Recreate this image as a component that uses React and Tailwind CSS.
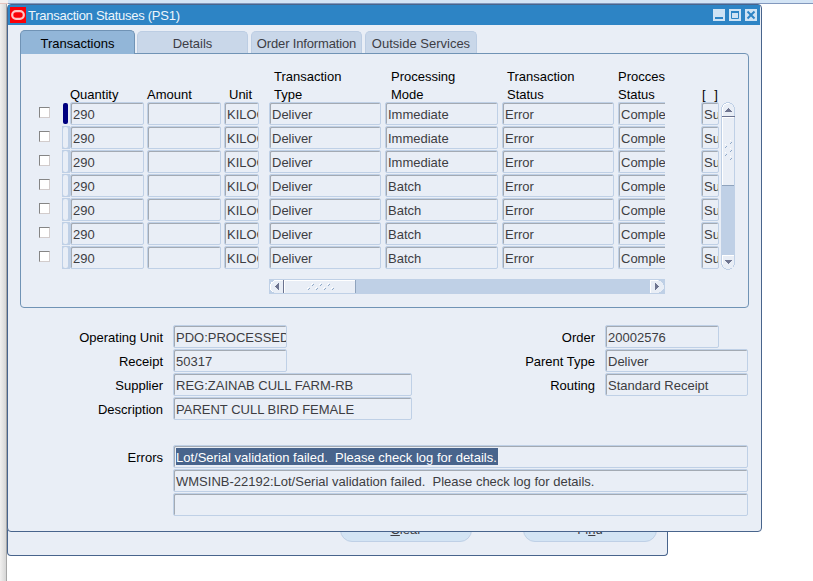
import React from 'react';
import clsx from 'clsx';

const rows = [
    { mode: 'Immediate', current: true },
    { mode: 'Immediate' },
    { mode: 'Immediate' },
    { mode: 'Batch' },
    { mode: 'Batch' },
    { mode: 'Batch' },
    { mode: 'Batch' }
];

const columns = [
    { head: ['Quantity'], value: () => '290', className: 'w-[74px]' },
    { head: ['Amount'], value: () => '', className: 'ml-[3px] w-[74px]' },
    { head: ['Unit'], value: () => 'KILOG', className: 'ml-[3px] w-[35px]', headClass: 'pl-[5px]' },
    { head: ['Transaction', 'Type'], value: () => 'Deliver', className: 'ml-[10px] w-[112px]', headClass: 'pl-[5px]' },
    { head: ['Processing', 'Mode'], value: (row) => row.mode, className: 'ml-1 w-[113px]', headClass: 'pl-1.5' },
    { head: ['Transaction', 'Status'], value: () => 'Error', className: 'ml-1 w-[112px]', headClass: 'pl-[5px]' },
    { head: ['Procces', 'Status'], value: () => 'Comple', className: 'ml-1 w-[47px]', cut: true },
    { head: ['[  ]'], value: () => 'Su', className: 'ml-9 w-[18px]', headClass: 'pl-px tracking-[0.5px]' }
];

const Field = ({ children, className, cut, selected }) => (
    <div
        className={clsx(
            'h-[23px] shrink-0 overflow-hidden whitespace-pre border border-[#bfd0e6] pl-px text-[#3d3d42] shadow-[inset_1px_1px_0_#a3aab3]',
            cut ? 'rounded-l-[2px] border-r-0' : 'rounded-[2px]',
            className
        )}
    >
        {selected ? (
            <span className="mt-[2px] ml-px block h-[17px] w-[322px] bg-[#48648c] leading-[19px] text-white">{children}</span>
        ) : (
            <span className="block pl-px leading-[23px]">{children}</span>
        )}
    </div>
);

const Column = ({ head, value, className, headClass, cut }) => (
    <div className={clsx('shrink-0', className)}>
        <div className={clsx('h-[34px] whitespace-pre leading-[18px] text-black', headClass, head.length === 1 && 'pt-[18px]')}>
            {head.map((line) => (
                <div key={line}>{line}</div>
            ))}
        </div>
        <div className="flex flex-col gap-px">
            {rows.map((row, i) => (
                <Field key={i} cut={cut}>{value(row)}</Field>
            ))}
        </div>
    </div>
);

const VerticalScroll = () => (
    <svg className="mt-[34px] ml-[2px] h-[168px] w-[14px] shrink-0" viewBox="0 0 14 168" shapeRendering="crispEdges">
        <rect y="14" width="14" height="140" fill="#bfd0e6" />
        <path d="M.5 15V5.5L2.500 2.500L5.500.5H8.500L11.500 2.500L13.500 5.500V15" fill="#e9eef6" stroke="#bfd0e6" />
        <path d="M1.500 14V6L3 3L6 1.500H8" fill="none" stroke="#fff" />
        <path d="M3 10h8L7 6z" fill="#6f7590" />
        <rect x="1" y="14" width="13" height="1" fill="#6b7390" />
        <rect x="1" y="15" width="12" height="68" fill="#e9eef6" />
        <path d="M1.500 83V15.500H13" fill="none" stroke="#fff" />
        <rect x="1" y="83" width="12" height="1" fill="#8fa3bd" />
        <g shapeRendering="auto" stroke="#8fa9c8">
            <path d="M9 42l2-2M4 46l2-2M9 50l2-2M4 54l2-2M9 58l2-2" />
            <path d="M9 39l1-1M4 43l1-1M9 47l1-1M4 51l1-1M9 55l1-1" stroke="#fff" />
        </g>
        <path d="M.5 153V162.500L2.500 165.500L5.500 167.500H8.500L11.500 165.500L13.500 162.500V153z" fill="#e9eef6" stroke="#bfd0e6" />
        <path d="M1.500 162V153.500H13" fill="none" stroke="#fff" />
        <path d="M3 158h8l-4 4z" fill="#6f7590" />
    </svg>
);

const HorizontalScroll = () => (
    <svg className="h-[15px] w-[396px]" viewBox="0 0 396 15" shapeRendering="crispEdges">
        <rect width="396" height="15" fill="#bfd0e6" />
        <path d="M14 1H6L3 3L1 6v3l2 3l3 2h8z" fill="#e9eef6" />
        <path d="M14 1.500H6L3 3.500L1.500 6v4l2 3" fill="none" stroke="#fff" />
        <path d="M10 4v7L6 7.500z" fill="#6f7590" />
        <rect x="14" y="1" width="1" height="13" fill="#6b7390" />
        <rect x="15" y="1" width="71" height="13" fill="#e9eef6" />
        <path d="M15.500 14V1.500H86" fill="none" stroke="#fff" />
        <rect x="86" y="1" width="1" height="13" fill="#8fa3bd" />
        <g shapeRendering="auto" stroke="#8fa9c8">
            <path d="M43 7l2-2M51 7l2-2M59 7l2-2M39 11l2-2M47 11l2-2M55 11l2-2M63 11l2-2" />
            <path d="M42 6l2-2M50 6l2-2M58 6l2-2M38 10l2-2M46 10l2-2M54 10l2-2M62 10l2-2" stroke="#fff" />
        </g>
        <path d="M381 1h8l4 2l2 4v2l-2 3l-4 2h-8z" fill="#e9eef6" />
        <path d="M381.500 14V1.500H389" fill="none" stroke="#fff" />
        <path d="M386 4v7l4-3.500z" fill="#6f7590" />
    </svg>
);

const TitleButton = ({ children }) => (
    <svg className="size-3" viewBox="0 0 12 12">
        <rect width="12" height="12" fill="#cfe3f4" />
        {children}
    </svg>
);

const TitleBar = () => (
    <div className="mr-px flex h-5 items-center bg-[#2d84c5] pr-[3px] pl-[2px]">
        <svg className="h-4 w-4" viewBox="0 0 16 16">
            <rect width="16" height="16" fill="#fb0007" />
            <rect x="2.200" y="4.200" width="11.600" height="7.600" rx="3.800" fill="none" stroke="#ffc4c4" strokeWidth="2.200" />
        </svg>
        <span className="ml-[2px] whitespace-pre pt-px leading-5 tracking-[-0.26px] text-[#eef6fc]">Transaction Statuses (PS1)</span>
        <div className="ml-auto flex gap-1">
            <TitleButton>
                <rect x="2" y="8" width="8" height="2" fill="#2d84c5" />
            </TitleButton>
            <TitleButton>
                <path d="M2.500 3h7v6.500h-7z" fill="none" stroke="#2d84c5" />
                <rect x="2" y="2" width="8" height="2" fill="#2d84c5" />
            </TitleButton>
            <TitleButton>
                <path d="M2.500 2.500l7 7M9.500 2.500l-7 7" stroke="#2d84c5" strokeWidth="2" />
            </TitleButton>
        </div>
    </div>
);

const Tab = ({ children, className }) => (
    <div className={clsx('mt-px h-[22px] rounded-t-[5px] border border-b-0 border-[#bccde3] bg-[#c9d7e9] text-center leading-[24px] whitespace-nowrap text-[#3d3d45]', className)}>
        {children}
    </div>
);

const LabelledField = ({ label, labelClass, fieldClass, children, selected }) => (
    <div className="flex h-[23px]">
        <div className={clsx('shrink-0 text-right leading-[26px] whitespace-nowrap text-black', labelClass)}>{label}</div>
        <Field className={clsx('ml-[10px]', fieldClass)} selected={selected}>{children}</Field>
    </div>
);

const BackWindow = () => (
    <div className="absolute top-[500px] left-[7px] flex h-[56px] w-[661px] rounded-b-[4px] border border-t-0 border-[#48648c] bg-[#e9eef6] pl-[332px]">
        <div className="h-[42px] w-[132px] rounded-b-[12px] border border-[#bfd0e6] bg-[#d3e4f4] pt-[19px] text-center leading-5 text-[#3d3d42]">
            <span className="underline underline-offset-1">C</span>lear
        </div>
        <div className="ml-[51px] h-[42px] w-[134px] rounded-b-[12px] border border-[#bfd0e6] bg-[#d3e4f4] pt-[19px] text-center leading-5 text-[#3d3d42]">
            Fi<span className="underline underline-offset-1">n</span>d
        </div>
    </div>
);

const TransactionsPanel = () => (
    <div className="h-[255px] w-[729px] rounded-[4px] rounded-tl-none border border-[#7093b5] pt-[14px]">
        <div className="flex h-[202px]">
            <div className="ml-[18px] w-[11px] pt-[39px]">
                {rows.map((row, i) => (
                    <div key={i} className="mb-[13px] size-[11px] border border-t-[#858585] border-r-[#d2cccc] border-b-[#d2cccc] border-l-[#858585] bg-white" />
                ))}
            </div>
            <div className="ml-3 w-2 pt-[34px]">
                {rows.map((row, i) => (
                    <div key={i} className={clsx('mb-px h-[23px]', row.current ? 'py-px pl-px' : 'bg-[#bfd0e6] p-px')}>
                        <div className={clsx('h-[21px] w-[5px] rounded-[2px]', row.current ? 'bg-[#00007f]' : 'bg-[#e9eef6]')} />
                    </div>
                ))}
            </div>
            {columns.map((column, i) => (
                <Column key={i} {...column} />
            ))}
            <VerticalScroll />
        </div>
        <div className="mt-[9px] pl-[248px]">
            <HorizontalScroll />
        </div>
    </div>
);

const App = () => {
    return (
        <div className="relative h-[581px] w-[813px] overflow-hidden bg-white font-['Liberation_Sans',Arial,sans-serif] text-[13px]">
            <div className="h-1 border-b border-[#8298bd] bg-[#d3e4f5]" />
            <div className="absolute top-0 left-0 h-[581px] w-[7px] border-r border-[#a6a6a6] bg-linear-to-r from-[#f1f0ef] to-[#d6d6d6]" />
            <div className="absolute top-0 left-0 h-1 w-2 border-b border-[#e5c5bf] bg-[#f4f0ef]" />
            <BackWindow />
            <div className="absolute top-1 left-[7px] h-[528px] w-[755px] rounded-[4px] border border-[#48648c] bg-[#e9eef6]">
                <TitleBar />
                <div className="mt-[5px] ml-3 flex h-[23px]">
                    <div className="z-10 h-6 w-[115px] rounded-t-[5px] border border-b-0 border-[#7093b5] bg-[#92b6d8] text-center leading-[25px] text-black">
                        Transactions
                    </div>
                    <Tab className="ml-[2px] w-[111px]">Details</Tab>
                    <Tab className="ml-[3px] w-[111px] tracking-[-0.15px]">Order Information</Tab>
                    <Tab className="ml-[3px] w-[112px]">Outside Services</Tab>
                </div>
                <div className="pl-3">
                    <TransactionsPanel />
                </div>
                <div className="mt-[17px] flex">
                    <div className="flex flex-col gap-px">
                        <LabelledField label="Operating Unit" labelClass="w-[155px]" fieldClass="w-[114px]">PDO:PROCESSED</LabelledField>
                        <LabelledField label="Receipt" labelClass="w-[155px]" fieldClass="w-[114px]">50317</LabelledField>
                        <LabelledField label="Supplier" labelClass="w-[155px]" fieldClass="w-[239px]">REG:ZAINAB CULL FARM-RB</LabelledField>
                        <LabelledField label="Description" labelClass="w-[155px]" fieldClass="w-[239px]">PARENT CULL BIRD FEMALE</LabelledField>
                    </div>
                    <div className="flex flex-col gap-px">
                        <LabelledField label="Order" labelClass="w-[183px]" fieldClass="w-[114px]">20002576</LabelledField>
                        <LabelledField label="Parent Type" labelClass="w-[183px]" fieldClass="w-[143px]">Deliver</LabelledField>
                        <LabelledField label="Routing" labelClass="w-[183px]" fieldClass="w-[143px]">Standard Receipt</LabelledField>
                    </div>
                </div>
                <div className="mt-[25px] flex flex-col gap-px">
                    <LabelledField label="Errors" labelClass="w-[155px]" fieldClass="w-[575px]" selected>
                        {'Lot/Serial validation failed.  Please check log for details.'}
                    </LabelledField>
                    <LabelledField label="" labelClass="w-[155px]" fieldClass="w-[575px]">
                        {'WMSINB-22192:Lot/Serial validation failed.  Please check log for details.'}
                    </LabelledField>
                    <LabelledField label="" labelClass="w-[155px]" fieldClass="w-[575px]" />
                </div>
            </div>
        </div>
    );
};

export default App;
